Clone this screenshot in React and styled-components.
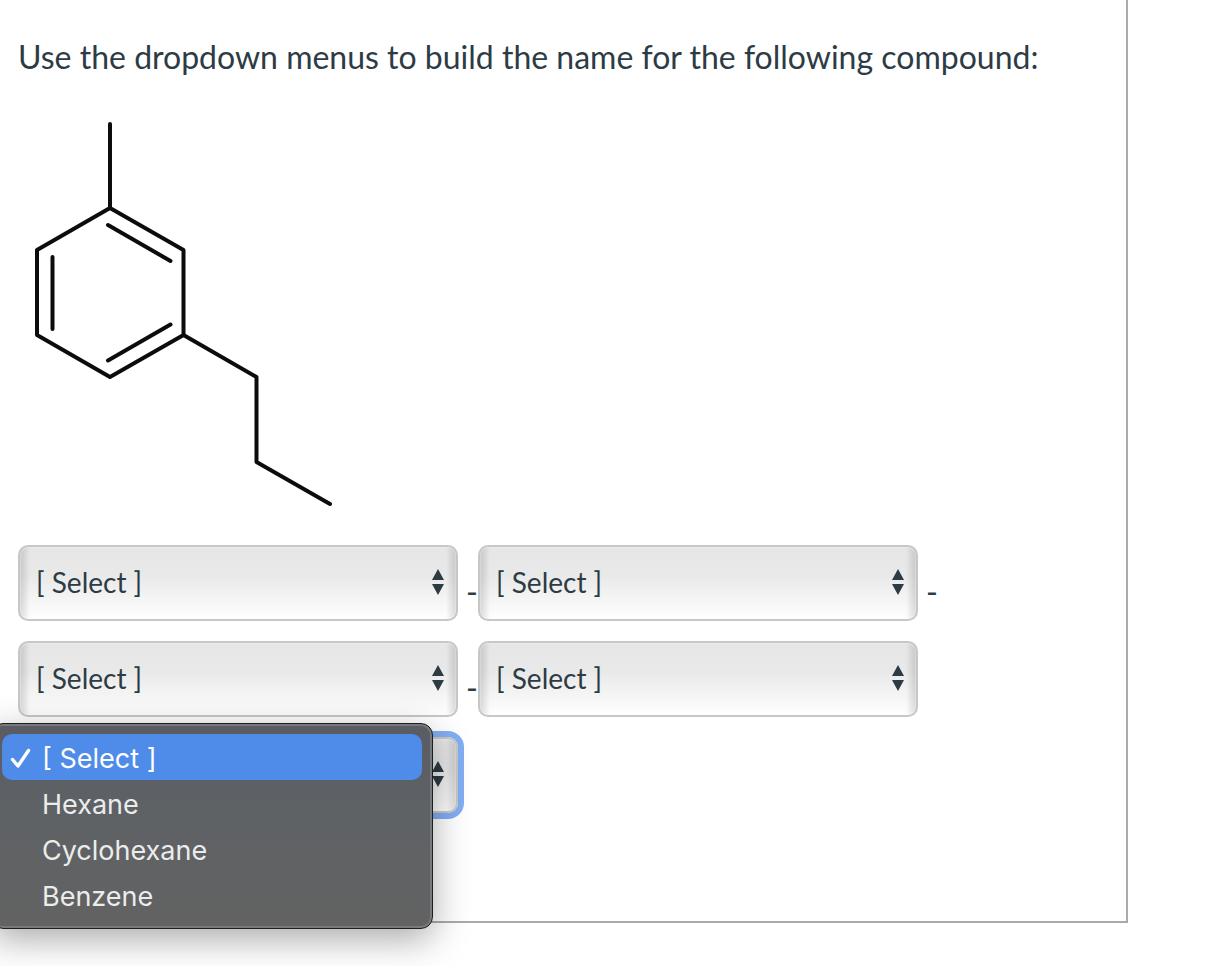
import React, { useState } from 'react';
import styled, { createGlobalStyle, css } from 'styled-components';

const GlobalStyle = createGlobalStyle`
  * {
    box-sizing: border-box;
  }

  body {
    margin: 0;
    background: #fff;
    color: #2d3b45;
    font-family: Lato, 'Open Sans', sans-serif;
  }
`;

const Page = styled.div`
  min-height: 100vh;
  overflow: hidden;
`;

const Question = styled.main`
  margin-right: 86px;
  padding: 33px 18px 108px;
  border-right: 2px solid #aaa;
  border-bottom: 2px solid #aaa;
`;

const Prompt = styled.p`
  margin: 0 0 21px;
  font-size: 32px;
  line-height: 48px;
`;

const Molecule = styled.svg`
  display: block;
  width: 332px;
  height: 424px;
  margin-bottom: 19px;
  fill: none;
  stroke: #0c0c0c;
  stroke-width: 4;
  stroke-linecap: round;
  stroke-linejoin: round;
`;

const Blanks = styled.div`
  display: flex;
  flex-direction: column;
  gap: 20px;
`;

const Row = styled.div`
  display: flex;
  align-items: center;
`;

const Separator = styled.span`
  width: 20px;
  padding-top: 18px;
  font-size: 32px;
  line-height: 40px;
  text-align: right;
`;

const Field = styled.div`
  position: relative;
  width: 440px;
`;

const Select = styled.select`
  display: block;
  appearance: none;
  width: 100%;
  height: 76px;
  padding: 0 56px 2px 16px;
  border: 2px solid #c7c7c7;
  border-radius: 10px;
  outline: none;
  background:
    linear-gradient(to right, rgba(0, 0, 0, 0.14), transparent 10px),
    linear-gradient(to left, rgba(0, 0, 0, 0.14), transparent 10px),
    linear-gradient(#e6e6e6, #e9e9e9 40%, #fff);
  box-shadow: inset 0 0 2px #fff;
  color: #2d3b45;
  font-family: inherit;
  font-size: 28px;
  line-height: 40px;

  ${({ $open }) =>
    $open &&
    css`
      box-shadow: inset 0 0 2px #fff, 0 0 0 6px #82aef3;
    `}
`;

const Arrows = styled.svg`
  position: absolute;
  top: 24px;
  right: 14px;
  width: 12px;
  height: 26px;
  fill: #2d3b45;
  pointer-events: none;
`;

const Menu = styled.ul`
  position: absolute;
  top: -14px;
  left: -27px;
  width: 442px;
  margin: 0;
  padding: 10px;
  list-style: none;
  border: 1px solid #1c1e20;
  border-radius: 12px;
  background: linear-gradient(#595d63, #5f6265 50%, #626262);
  box-shadow: inset 0 0 0 2px #77797c, 0 10px 36px rgba(0, 0, 0, 0.34);
`;

const Option = styled.li`
  display: flex;
  align-items: center;
  height: 46px;
  padding: 4px 0 0 8px;
  border-radius: 10px;
  background: ${({ $selected }) => ($selected ? '#4f8be8' : 'transparent')};
  color: ${({ $selected }) => ($selected ? '#fff' : '#ececec')};
  font-family: Inter, 'Liberation Sans', sans-serif;
  font-size: 27px;
  line-height: 40px;
  cursor: default;
`;

const Mark = styled.span`
  flex: none;
  display: flex;
  width: 32px;
`;

const Check = () => (
  <svg width="22" height="22" viewBox="0 0 22 22" fill="none" stroke="#fff" strokeWidth="3.4" strokeLinecap="round" strokeLinejoin="round" aria-hidden="true">
    <path d="M2.5 11.5 L8 18 L18.5 2.5" />
  </svg>
);

const OPTIONS = ['[ Select ]', 'Hexane', 'Cyclohexane', 'Benzene'];

const Blank = ({ label, open }) => {
  const [value, setValue] = useState(OPTIONS[0]);

  return (
    <Field>
      <Select aria-label={label} value={value} onChange={(e) => setValue(e.target.value)} $open={open}>
        {OPTIONS.map((option) => (
          <option key={option}>{option}</option>
        ))}
      </Select>
      <Arrows viewBox="0 0 12 26" aria-hidden="true">
        <path d="M6 0 L12 11 H0 Z M0 15 H12 L6 26 Z" />
      </Arrows>
      {open && (
        <Menu role="listbox" aria-label={label}>
          {OPTIONS.map((option) => (
            <Option
              key={option}
              role="option"
              aria-selected={option === value}
              $selected={option === value}
              onClick={() => setValue(option)}
            >
              <Mark>{option === value && <Check />}</Mark>
              {option}
            </Option>
          ))}
        </Menu>
      )}
    </Field>
  );
};

const App = () => {
  return (
    <Page>
      <GlobalStyle />
      <Question>
        <Prompt>Use the dropdown menus to build the name for the following compound:</Prompt>
        <Molecule viewBox="0 0 332 424" role="img" aria-label="Skeletal structure">
          {/* ring */}
          <path d="M92 106 L165.5 148 V233 L92 275 L19 233 V148 Z" />
          {/* double bonds */}
          <path d="M90 123 L152.5 159 M90 258.5 L152.5 222.5 M34.5 155 V227" />
          {/* side chains */}
          <path d="M92 106 V22 M165.5 233 L238.5 275 V360 L312 402" />
        </Molecule>
        <Blanks>
          <Row>
            <Blank label="Part 1" />
            <Separator>-</Separator>
            <Blank label="Part 2" />
            <Separator>-</Separator>
          </Row>
          <Row>
            <Blank label="Part 3" />
            <Separator>-</Separator>
            <Blank label="Part 4" />
          </Row>
          <Row>
            <Blank label="Part 5" open />
          </Row>
        </Blanks>
      </Question>
    </Page>
  );
};

export default App;
